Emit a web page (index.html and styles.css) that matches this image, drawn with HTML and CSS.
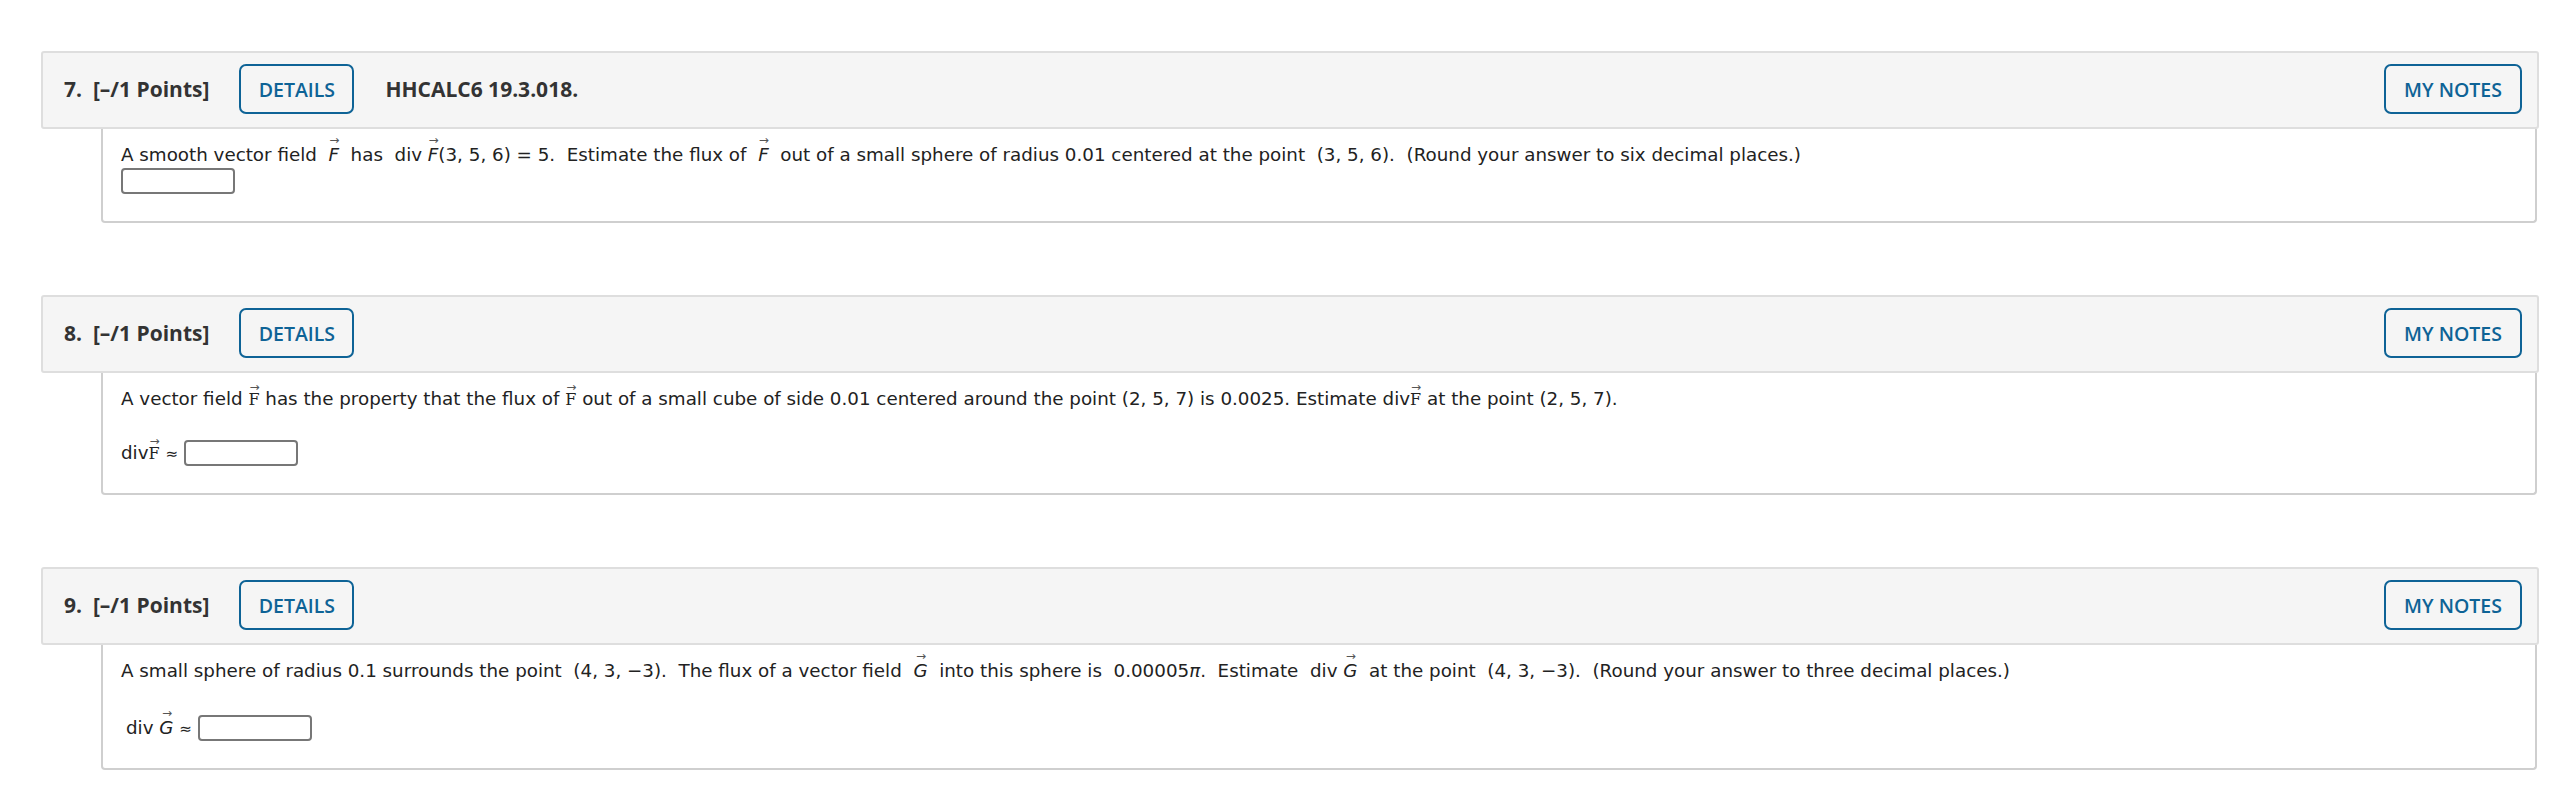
FILE: index.html
```html
<!DOCTYPE html>
<html>
<head>
<meta charset="utf-8">
<link rel="stylesheet" href="styles.css">
</head>
<body>
<div class="page">
  <section class="question">
    <header class="qhead">
      <span class="qnum">7.&nbsp; [–/1 Points]</span>
      <button class="btn">DETAILS</button>
      <span class="qref">HHCALC6 19.3.018.</span>
      <span class="spacer"></span>
      <button class="btn notes">MY NOTES</button>
    </header>
    <div class="qbody q7">
      <div class="line">A smooth vector field&nbsp; <span class="vec it"><span class="arr">→</span>F</span>&nbsp; has&nbsp; div&nbsp;<span class="vec it"><span class="arr">→</span>F</span>(3, 5, 6) = 5.&nbsp; Estimate the flux of&nbsp; <span class="vec it"><span class="arr">→</span>F</span>&nbsp; out of a small sphere of radius 0.01 centered at the point&nbsp; (3, 5, 6).&nbsp; (Round your answer to six decimal places.)</div>
      <div class="answer first"><span class="box"></span></div>
    </div>
  </section>

  <section class="question">
    <header class="qhead">
      <span class="qnum">8.&nbsp; [–/1 Points]</span>
      <button class="btn">DETAILS</button>
      <span class="spacer"></span>
      <button class="btn notes">MY NOTES</button>
    </header>
    <div class="qbody">
      <div class="line">A vector field <span class="vec serif"><span class="arr">→</span>F</span> has the property that the flux of <span class="vec serif"><span class="arr">→</span>F</span> out of a small cube of side 0.01 centered around the point (2, 5, 7) is 0.0025. Estimate div<span class="vec serif"><span class="arr">→</span>F</span> at the point (2, 5, 7).</div>
      <div class="answer gap"><span class="label">div<span class="vec serif"><span class="arr">→</span>F</span> <span class="approx">≈</span></span><span class="box"></span></div>
    </div>
  </section>

  <section class="question">
    <header class="qhead">
      <span class="qnum">9.&nbsp; [–/1 Points]</span>
      <button class="btn">DETAILS</button>
      <span class="spacer"></span>
      <button class="btn notes">MY NOTES</button>
    </header>
    <div class="qbody">
      <div class="line">A small sphere of radius 0.1 surrounds the point&nbsp; (4, 3, −3).&nbsp; The flux of a vector field&nbsp; <span class="vec it"><span class="arr">→</span>G</span>&nbsp; into this sphere is&nbsp; 0.00005<i>π</i>.&nbsp; Estimate&nbsp; div <span class="vec it"><span class="arr">→</span>G</span>&nbsp; at the point&nbsp; (4, 3, −3).&nbsp; (Round your answer to three decimal places.)</div>
      <div class="answer gap2"><span class="label indent">div <span class="vec it"><span class="arr">→</span>G</span> <span class="approx">≈</span></span><span class="box"></span></div>
    </div>
  </section>
</div>
</body>
</html>
```

FILE: styles.css
```css
html, body {
  margin: 0;
  padding: 0;
  background: #ffffff;
}

.page {
  padding: 51px 21px 0 41px;
  display: flex;
  flex-direction: column;
  gap: 72px;
}

.question {
  display: flex;
  flex-direction: column;
}

.qhead {
  display: flex;
  align-items: center;
  height: 78px;
  box-sizing: border-box;
  padding: 0 15px 2px 21px;
  background: #f5f5f5;
  border: 2px solid #dedede;
  border-radius: 3px;
  font-family: "Open Sans", "DejaVu Sans", sans-serif;
  color: #333333;
}

.qnum {
  font-weight: 700;
  font-size: 21px;
  white-space: pre;
}

.qref {
  font-weight: 700;
  font-size: 21px;
  margin-left: 31px;
}

.spacer {
  flex: 1;
}

.btn {
  font-family: "Open Sans", "DejaVu Sans", sans-serif;
  font-weight: 600;
  font-size: 19.5px;
  color: #0e6396;
  background: #f5f5f5;
  border: 2px solid #0e6396;
  border-radius: 7px;
  height: 50px;
  width: 115px;
  padding: 0;
  margin-left: 30px;
  box-sizing: border-box;
}

.btn.notes {
  margin-left: 0;
  width: 138px;
}

.qbody {
  margin-left: 60px;
  margin-right: 2px;
  border: 2px solid #cfcfcf;
  border-top: none;
  border-radius: 0 0 4px 4px;
  padding: 16px 18px 27px 18px;
  font-family: "DejaVu Sans", Verdana, sans-serif;
  font-size: 18.3px;
  line-height: 20px;
  color: #222222;
}

.answer {
  display: flex;
  align-items: center;
  height: 26px;
  gap: 6px;
}

.answer.first {
  margin-top: 3px;
}

.answer.gap {
  margin-top: 30px;
}

.answer.gap2 {
  margin-top: 34px;
}

.label {
  font-size: 18.3px;
}

.label.indent {
  padding-left: 5px;
}

.approx {
  font-size: 15px;
}

.box {
  display: block;
  width: 114px;
  height: 26px;
  box-sizing: border-box;
  border: 2px solid #777777;
  border-radius: 4px;
  background: #ffffff;
}

.vec {
  position: relative;
  display: inline-block;
}

.vec .arr {
  position: absolute;
  left: 50%;
  top: -11px;
  transform: translateX(-45%);
  font-size: 12px;
  font-style: normal;
  line-height: 12px;
  color: #555;
}

.vec.it {
  font-style: italic;
}

.vec.serif {
  font-family: "DejaVu Serif", "Liberation Serif", serif;
  font-size: 16px;
}

.vec.serif .arr {
  top: -9px;
  font-family: "DejaVu Sans", sans-serif;
}
```
